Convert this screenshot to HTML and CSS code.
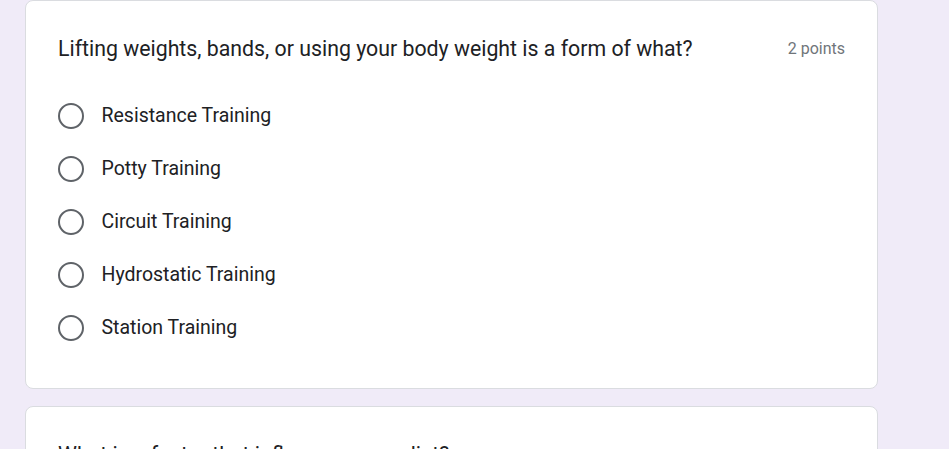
FILE: index.html
```html
<!DOCTYPE html>
<html lang="en">
<head>
<meta charset="utf-8">
<title>Quiz</title>
<link rel="stylesheet" href="styles.css">
</head>
<body>
<main class="form">
  <section class="card">
    <div class="q-head">
      <h2 class="q-title">Lifting weights, bands, or using your body weight is a form of what?</h2>
      <span class="q-points">2 points</span>
    </div>
    <ul class="options">
      <li class="option"><span class="radio"></span><span class="label">Resistance Training</span></li>
      <li class="option"><span class="radio"></span><span class="label">Potty Training</span></li>
      <li class="option"><span class="radio"></span><span class="label">Circuit Training</span></li>
      <li class="option"><span class="radio"></span><span class="label">Hydrostatic Training</span></li>
      <li class="option"><span class="radio"></span><span class="label">Station Training</span></li>
    </ul>
  </section>
  <section class="card">
    <div class="q-head">
      <h2 class="q-title">What is a factor that influences your diet?</h2>
    </div>
  </section>
</main>
</body>
</html>
```
FILE: styles.css
```css
html, body {
  margin: 0;
  padding: 0;
  height: 449px;
  overflow: hidden;
}
body {
  background: #f0ebf8;
  font-family: Roboto, "Liberation Sans", Arial, sans-serif;
  color: #202124;
}
.form {
  display: flex;
  flex-direction: column;
  gap: 17px;
  padding-left: 25px;
  width: 853px;
}
.card {
  box-sizing: border-box;
  width: 853px;
  background: #ffffff;
  border: 1px solid #dadce0;
  border-radius: 8px;
  padding: 33px 32px 33px 32px;
}
.q-head {
  display: flex;
  align-items: center;
  justify-content: space-between;
  gap: 24px;
}
.q-title {
  margin: 0;
  font-size: 21.3px;
  font-weight: 400;
  line-height: 30px;
  color: #202124;
}
.q-points {
  font-size: 16px;
  line-height: 30px;
  color: #70757a;
  white-space: nowrap;
}
.options {
  list-style: none;
  margin: 25px 0 0 0;
  padding: 0;
}
.option {
  display: flex;
  align-items: center;
  gap: 18px;
  height: 53.2px;
}
.radio {
  box-sizing: border-box;
  width: 26px;
  height: 26px;
  border: 2.6px solid #5f6368;
  border-radius: 50%;
  margin-left: -0.5px;
  flex: none;
}
.label {
  font-size: 19.5px;
  line-height: 26px;
  color: #202124;
}
```
